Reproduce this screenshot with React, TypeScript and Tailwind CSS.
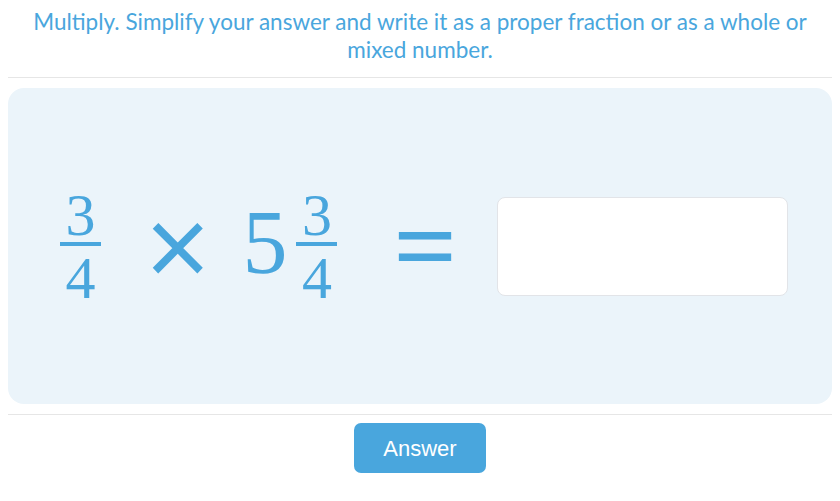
import React from 'react';

const blue = 'text-[#49a6dd]';

function Fraction({ top, bottom }: { top: string; bottom: string }) {
  return (
    <div className="flex flex-col items-center w-[41px]">
      <span className="text-[60px] leading-[52px] h-[52px]">{top}</span>
      <div className="w-full h-[4px] bg-[#49a6dd] mt-[1px] mb-[6px]" />
      <span className="text-[60px] leading-[52px] h-[52px]">{bottom}</span>
    </div>
  );
}

export default function App() {
  return (
    <div className="w-[840px] h-[501px] bg-white px-2 flex flex-col">
      <h1
        className={`${blue} text-center text-[22.5px] leading-[28px] pt-[8px] pb-[13px] px-4 font-['Lato',sans-serif]`}
      >
        Multiply. Simplify your answer and write it as a proper fraction or as a whole or mixed number.
      </h1>
      <div className="border-t border-[#e6e6e6]" />
      <div
        className={`mt-[10px] h-[316px] rounded-[16px] bg-[#ebf4fa] flex items-center pl-[52px] ${blue} font-['Liberation_Serif','Times_New_Roman',serif]`}
      >
        <Fraction top="3" bottom="4" />
        <span className="ml-[44px] text-[116px] leading-none mt-[4px] [-webkit-text-stroke:2px_#49a6dd]">×</span>
        <span className="ml-[32px] text-[90px] leading-none -mt-[6px]">5</span>
        <div className="ml-[9px]">
          <Fraction top="3" bottom="4" />
        </div>
        <span className="ml-[57px] text-[108px] leading-none [-webkit-text-stroke:2px_#49a6dd]">=</span>
        <div className="ml-[42px] w-[291px] h-[99px] bg-white rounded-[8px] border border-[#e2e4e8]" />
      </div>
      <div className="mt-[10px] border-t border-[#e6e6e6]" />
      <div className="flex justify-center pt-[8px]">
        <button className="w-[132px] h-[50px] rounded-[7px] bg-[#49a6dd] text-white text-[22px] font-['Liberation_Sans',Arial,sans-serif]">
          Answer
        </button>
      </div>
    </div>
  );
}
